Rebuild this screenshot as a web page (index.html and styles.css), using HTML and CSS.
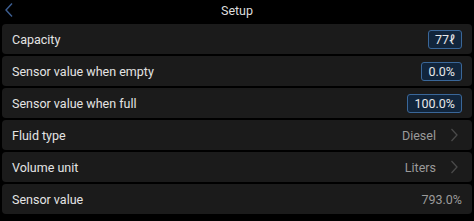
FILE: index.html
```html
<!DOCTYPE html>
<html lang="en">
<head>
    <meta charset="UTF-8">
    <title>Setup</title>
    <link rel="stylesheet" href="styles.css">
</head>
<body>
    <div class="header">
        <svg class="back" width="10" height="16" viewBox="0 0 10 16"><path d="M8 1.5 L2 8 L8 14.5" fill="none" stroke="#3d5f93" stroke-width="1.4"/></svg>
        <div class="title">Setup</div>
    </div>
    <ul class="list">
        <li class="row">
            <span class="label">Capacity</span>
            <span class="field">77ℓ</span>
        </li>
        <li class="row">
            <span class="label">Sensor value when empty</span>
            <span class="field">0.0%</span>
        </li>
        <li class="row">
            <span class="label">Sensor value when full</span>
            <span class="field">100.0%</span>
        </li>
        <li class="row">
            <span class="label">Fluid type</span>
            <span class="value">Diesel</span>
            <svg class="chev" width="8" height="14" viewBox="0 0 8 14"><path d="M1.5 1 L7 7 L1.5 13" fill="none" stroke="#4a4a4a" stroke-width="1.3"/></svg>
        </li>
        <li class="row">
            <span class="label">Volume unit</span>
            <span class="value">Liters</span>
            <svg class="chev" width="8" height="14" viewBox="0 0 8 14"><path d="M1.5 1 L7 7 L1.5 13" fill="none" stroke="#4a4a4a" stroke-width="1.3"/></svg>
        </li>
        <li class="row">
            <span class="label">Sensor value</span>
            <span class="value">793.0%</span>
        </li>
    </ul>
</body>
</html>
```
FILE: styles.css
```css
* {
    margin: 0;
    padding: 0;
    box-sizing: border-box;
}

body {
    background: #000;
    font-family: Roboto, 'Liberation Sans', sans-serif;
    color: #e2e2e2;
    width: 474px;
    height: 221px;
    overflow: hidden;
}

.header {
    height: 24px;
    display: flex;
    align-items: center;
    justify-content: center;
    position: relative;
}

.back {
    position: absolute;
    left: 4px;
    top: 2px;
}

.title {
    font-size: 12.5px;
    color: #dedede;
    margin-top: -3px;
}

.list {
    list-style: none;
    display: flex;
    flex-direction: column;
    gap: 2px;
    padding: 0 2px;
}

.row {
    height: 30px;
    background: #1b1b1b;
    border-radius: 4px;
    display: flex;
    align-items: center;
    padding: 0 10px;
    font-size: 12.5px;
}

.label {
    flex-grow: 1;
    color: #e4e4e4;
}

.field {
    height: 19px;
    padding: 0 6px;
    border: 1px solid #3a6799;
    border-radius: 3px;
    background: #11253c;
    color: #e8e8e8;
    display: flex;
    align-items: center;
}

.value {
    color: #9a9a9a;
}

.chev {
    margin-left: 14px;
    margin-right: 4px;
}
```
